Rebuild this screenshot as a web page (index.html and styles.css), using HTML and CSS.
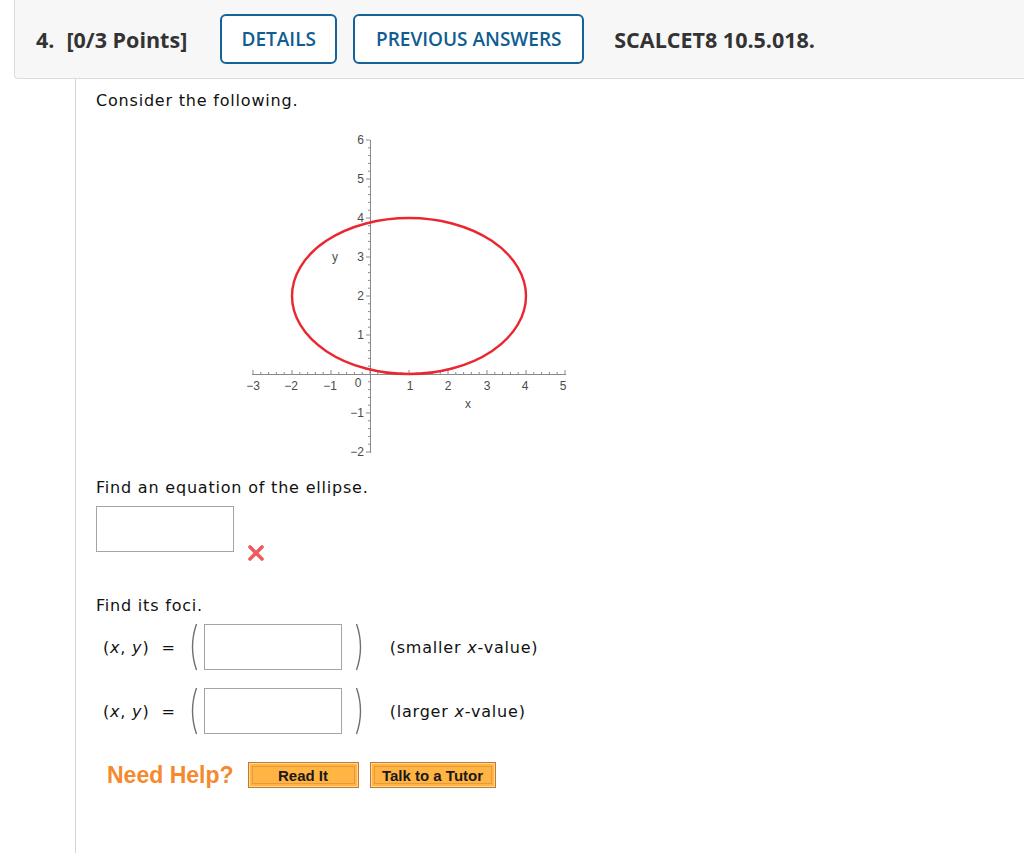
FILE: index.html
```html
<!DOCTYPE html>
<html>
<head>
<meta charset="utf-8">
<link rel="stylesheet" href="styles.css">
</head>
<body>
<div class="header">
  <span class="qnum">4.</span>
  <span class="points">[0/3 Points]</span>
  <span class="hbtn btn-details">DETAILS</span>
  <span class="hbtn btn-prev">PREVIOUS ANSWERS</span>
  <span class="qid">SCALCET8 10.5.018.</span>
</div>
<div class="main">
  <p class="line first">Consider the following.</p>
  <svg class="graph" width="340" height="330" viewBox="0 0 340 330">
    <g stroke="#8a8a8a" stroke-width="1" fill="none">
      <line x1="16" y1="242.5" x2="330" y2="242.5"/>
      <line x1="134.5" y1="8" x2="134.5" y2="321"/>
    </g>
    <g stroke="#8a8a8a" stroke-width="1">
      <path d="M17 242v-4 M24.8 242v-2 M32.6 242v-2 M40.4 242v-2 M48.2 242v-2 M56 242v-4 M63.8 242v-2 M71.6 242v-2 M79.4 242v-2 M87.2 242v-2 M95 242v-4 M102.8 242v-2 M110.6 242v-2 M118.4 242v-2 M126.2 242v-2 M134 242v-4 M141.8 242v-2 M149.6 242v-2 M157.4 242v-2 M165.2 242v-2 M173 242v-4 M180.8 242v-2 M188.6 242v-2 M196.4 242v-2 M204.2 242v-2 M212 242v-4 M219.8 242v-2 M227.6 242v-2 M235.4 242v-2 M243.2 242v-2 M251 242v-4 M258.8 242v-2 M266.6 242v-2 M274.4 242v-2 M282.2 242v-2 M290 242v-4 M297.8 242v-2 M305.6 242v-2 M313.4 242v-2 M321.2 242v-2 M329 242v-4"/>
      <path d="M134 8h-4 M134 15.8h-2 M134 23.6h-2 M134 31.4h-2 M134 39.2h-2 M134 47h-4 M134 54.8h-2 M134 62.6h-2 M134 70.4h-2 M134 78.2h-2 M134 86h-4 M134 93.8h-2 M134 101.6h-2 M134 109.4h-2 M134 117.2h-2 M134 125h-4 M134 132.8h-2 M134 140.6h-2 M134 148.4h-2 M134 156.2h-2 M134 164h-4 M134 171.8h-2 M134 179.6h-2 M134 187.4h-2 M134 195.2h-2 M134 203h-4 M134 210.8h-2 M134 218.6h-2 M134 226.4h-2 M134 234.2h-2 M134 249.8h-2 M134 257.6h-2 M134 265.4h-2 M134 273.2h-2 M134 281h-4 M134 288.8h-2 M134 296.6h-2 M134 304.4h-2 M134 312.2h-2 M134 320h-4"/>
    </g>
    <g class="ticklbl" text-anchor="middle">
      <text x="17" y="258">−3</text>
      <text x="55" y="258">−2</text>
      <text x="94" y="258">−1</text>
      <text x="122" y="255">0</text>
      <text x="174" y="258">1</text>
      <text x="212" y="258">2</text>
      <text x="251" y="258">3</text>
      <text x="289" y="258">4</text>
      <text x="327" y="258">5</text>
      <text x="232" y="276">x</text>
      <text x="99" y="129">y</text>
    </g>
    <g class="ticklbl" text-anchor="end">
      <text x="128" y="12">6</text>
      <text x="128" y="51">5</text>
      <text x="128" y="90">4</text>
      <text x="128" y="129">3</text>
      <text x="128" y="168">2</text>
      <text x="128" y="207">1</text>
      <text x="128" y="285">−1</text>
      <text x="128" y="324">−2</text>
    </g>
    <ellipse cx="173" cy="164" rx="117" ry="78" fill="none" stroke="#ea2630" stroke-width="2.4"/>
  </svg>
  <p class="line q2">Find an equation of the ellipse.</p>
  <div class="ansrow">
    <span class="box box-eq"></span>
    <svg class="xmark" width="18" height="16" viewBox="0 0 18 16"><path d="M3 2 L15 14 M15 2 L3 14" stroke="#f05a5a" stroke-width="3.6" stroke-linecap="round"/></svg>
  </div>
  <p class="line q3">Find its foci.</p>
  <div class="focirow r1">
    <span class="xy">(<i>x</i>, <i>y</i>)</span>
    <span class="eq">=</span>
    <svg class="paren po" width="10" height="48" viewBox="0 0 10 48"><path d="M8.5 1 Q0.5 24 8.5 47" stroke="#707070" stroke-width="1.4" fill="none"/></svg>
    <span class="box box-pt"></span>
    <svg class="paren pc" width="10" height="48" viewBox="0 0 10 48"><path d="M1.5 1 Q9.5 24 1.5 47" stroke="#707070" stroke-width="1.4" fill="none"/></svg>
    <span class="note">(smaller <i>x</i>-value)</span>
  </div>
  <div class="focirow r2">
    <span class="xy">(<i>x</i>, <i>y</i>)</span>
    <span class="eq">=</span>
    <svg class="paren po" width="10" height="48" viewBox="0 0 10 48"><path d="M8.5 1 Q0.5 24 8.5 47" stroke="#707070" stroke-width="1.4" fill="none"/></svg>
    <span class="box box-pt"></span>
    <svg class="paren pc" width="10" height="48" viewBox="0 0 10 48"><path d="M1.5 1 Q9.5 24 1.5 47" stroke="#707070" stroke-width="1.4" fill="none"/></svg>
    <span class="note">(larger <i>x</i>-value)</span>
  </div>
  <div class="help">
    <span class="needhelp">Need Help?</span>
    <span class="obtn obtn-read">Read It</span>
    <span class="obtn obtn-tutor">Talk to a Tutor</span>
  </div>
</div>
</body>
</html>
```
FILE: styles.css
```css
html, body {
  margin: 0;
  padding: 0;
  background: #ffffff;
}
body {
  font-family: "DejaVu Sans", Verdana, sans-serif;
  color: #111;
}
.header {
  margin-left: 14px;
  height: 79px;
  background: #f7f7f7;
  border-left: 1px solid #dcdcdc;
  border-bottom: 1px solid #dcdcdc;
  border-bottom-left-radius: 4px;
  display: flex;
  align-items: center;
  padding-left: 21px;
  font-family: "Open Sans", sans-serif;
  box-sizing: border-box;
}
.qnum, .points, .qid {
  font-weight: 700;
  font-size: 21.5px;
  color: #333;
}
.points {
  margin-left: 12px;
}
.hbtn {
  display: flex;
  align-items: center;
  justify-content: center;
  height: 50px;
  box-sizing: border-box;
  border: 2px solid #15629a;
  border-radius: 6px;
  color: #0f5d93;
  font-size: 19px;
  font-weight: 600;
  background: #ffffff;
}
.btn-details {
  width: 117px;
  margin-left: 33px;
}
.btn-prev {
  width: 231px;
  margin-left: 16px;
}
.qid {
  margin-left: 30px;
}
.main {
  margin-left: 75px;
  border-left: 1px solid #d4d4d4;
  padding-left: 20px;
  padding-top: 12px;
  height: 774px;
  box-sizing: border-box;
}
.line {
  margin: 0;
  font-size: 16px;
  line-height: 20px;
  letter-spacing: 0.8px;
}
.graph {
  display: block;
  margin-top: 21px;
  margin-left: 140px;
}
.ticklbl {
  font-family: "Liberation Sans", Arial, sans-serif;
  font-size: 12px;
  fill: #4a4a4a;
}
.q2 {
  margin-top: 16px;
}
.ansrow {
  display: flex;
  align-items: flex-end;
  margin-top: 8px;
}
.box {
  display: block;
  box-sizing: border-box;
  height: 46px;
  border: 1px solid #a4a4a4;
  background: #fff;
}
.box-eq {
  width: 138px;
}
.xmark {
  display: block;
  margin-left: 13px;
  margin-bottom: -9px;
}
.q3 {
  margin-top: 44px;
}
.focirow {
  display: flex;
  align-items: center;
  font-size: 16px;
  letter-spacing: 0.8px;
}
.r1 {
  margin-top: 7px;
}
.r2 {
  margin-top: 16px;
}
.xy {
  margin-left: 7px;
}
.eq {
  margin-left: 12px;
}
.paren {
  display: block;
}
.po {
  margin-left: 12px;
}
.box-pt {
  width: 138px;
  margin-left: 6px;
}
.pc {
  margin-left: 13px;
}
.note {
  margin-left: 25px;
}
.help {
  display: flex;
  align-items: center;
  margin-top: 27px;
  height: 26px;
  font-family: "Liberation Sans", Arial, sans-serif;
}
.needhelp {
  color: #f5892c;
  font-weight: 700;
  font-size: 23px;
  margin-left: 11px;
}
.obtn {
  display: flex;
  align-items: center;
  justify-content: center;
  box-sizing: border-box;
  height: 26px;
  background: #ffb443;
  border: 1px solid #c17a33;
  box-shadow: inset 0 0 0 1px #ffd896, inset 0 0 0 3px #ffb443, inset 0 0 0 4px #e59a3c;
  font-weight: 700;
  font-size: 15px;
  color: #1a1a1a;
}
.obtn-read {
  width: 111px;
  margin-left: 14px;
}
.obtn-tutor {
  width: 126px;
  margin-left: 11px;
}
```
